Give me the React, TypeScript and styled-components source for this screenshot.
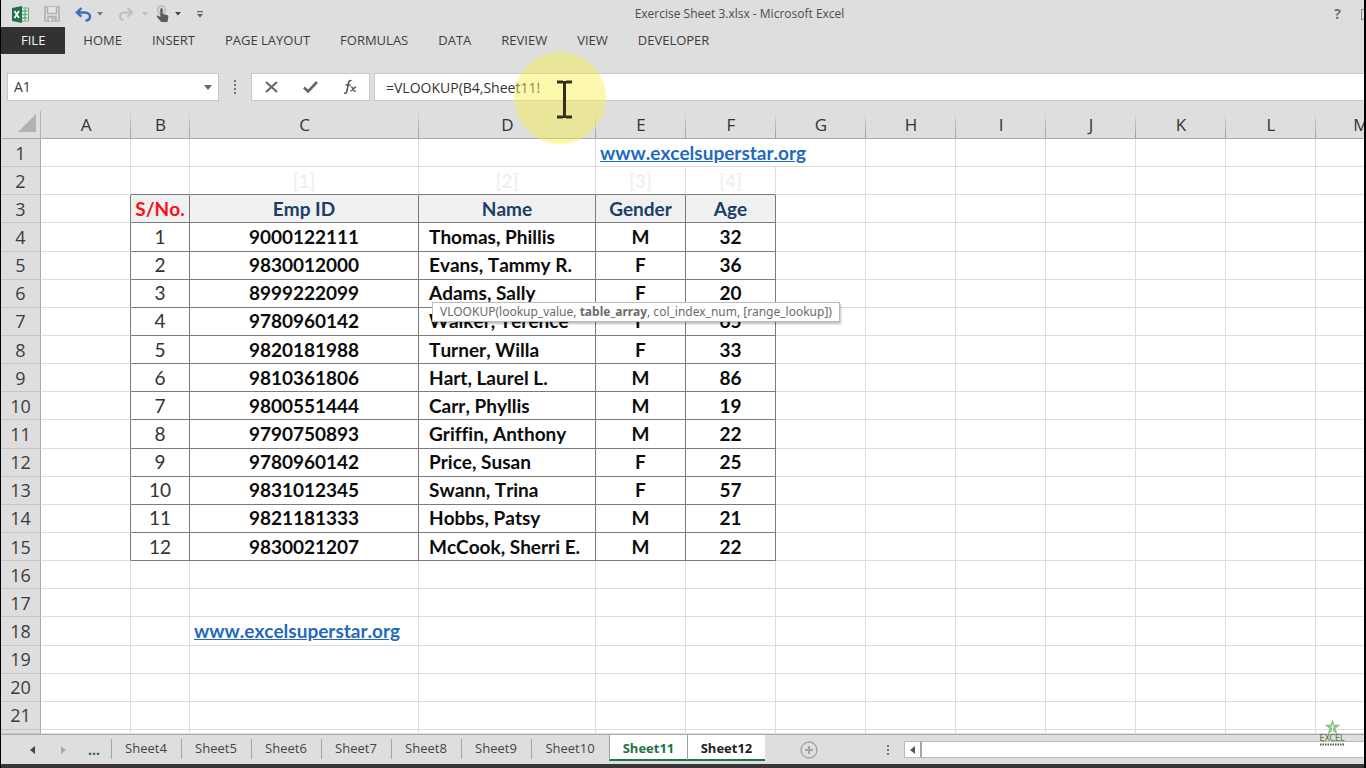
import React from "react";
import styled, { createGlobalStyle, css } from "styled-components";

const ui = `"Open Sans", "Noto Sans", sans-serif`;
const cellFont = `Lato, "Open Sans", sans-serif`;

const GlobalStyle = createGlobalStyle`
  * { box-sizing: border-box; }
  body { margin: 0; background: #000; font-family: ${ui}; }
  button, input { font-family: inherit; margin: 0; padding: 0; border: 0; background: none; color: inherit; }
  button { cursor: pointer; }
`;

const Frame = styled.div`
  position: relative;
  min-height: 100vh;
  display: flex;
  flex-direction: column;
  padding: 0 2px 0 1px;
  overflow: hidden;
`;

const Window = styled.main`
  position: relative;
  flex: 1;
  display: flex;
  flex-direction: column;
  min-width: 0;
  background: #dedede;
  border-bottom: 4px solid #3a3637;
`;

const TitleBar = styled.header`
  display: grid;
  grid-template-columns: 1fr auto 1fr;
  align-items: center;
  height: 27px;
`;

const QuickAccess = styled.div`
  display: flex;
  align-items: center;
  height: 24px;
  padding-left: 10px;
`;

const QuickButton = styled.button<{ $w: number }>`
  display: flex;
  align-items: center;
  width: ${(p) => p.$w}px;
  height: 24px;
`;

const Title = styled.h1`
  margin: 0;
  padding-left: 114px;
  font-size: 12px;
  line-height: 28px;
  font-weight: 400;
  color: #4c4c4c;
`;

const WindowControls = styled.div`
  display: flex;
  justify-content: flex-end;
  align-items: center;
  gap: 20px;
  overflow: hidden;
`;

const HelpButton = styled.button`
  font-size: 14px;
  line-height: 24px;
  font-weight: 700;
  color: #6f6f6f;
`;

const RestoreButton = styled.button`
  width: 3px;
  height: 11px;
  border: 1px solid #8b8b8b;
  border-right: 0;
`;

const Ribbon = styled.nav`
  display: flex;
  height: 28px;
`;

const RibbonTab = styled.button<{ $file?: boolean }>`
  flex: none;
  height: 27px;
  padding: ${(p) => (p.$file ? "0 20px" : "0 15px")};
  margin-right: ${(p) => (p.$file ? 3 : 0)}px;
  font-size: 13px;
  line-height: 27px;
  color: ${(p) => (p.$file ? "#f4f4f4" : "#3d3d3d")};
  background: ${(p) => (p.$file ? "#333132" : "transparent")};
`;

const FormulaRow = styled.div`
  display: flex;
  align-items: center;
  height: 28px;
  margin: 18px 0 10px;
  padding-left: 6px;
`;

const NameBox = styled.label`
  display: flex;
  align-items: center;
  width: 212px;
  height: 28px;
  padding: 0 6px;
  background: #fff;
  border: 1px solid #c8c8c8;
`;

const NameInput = styled.input`
  flex: 1;
  min-width: 0;
  font-size: 14px;
  line-height: 20px;
  color: #3a3a3a;
`;

const Dots = styled.span`
  display: flex;
  flex-direction: column;
  gap: 2px;
  width: 32px;
  align-items: center;
  i { width: 2px; height: 2px; background: #777; }
`;

const EditButtons = styled.div`
  display: flex;
  align-items: center;
  justify-content: space-around;
  width: 119px;
  height: 28px;
  background: #fff;
  border: 1px solid #c8c8c8;
`;

const EditButton = styled.button`
  display: flex;
  align-items: center;
  justify-content: center;
  width: 32px;
  height: 24px;
`;

const FormulaInput = styled.input`
  flex: 1;
  min-width: 0;
  height: 28px;
  margin-left: 4px;
  padding-left: 11px;
  background: #fff;
  border: 1px solid #c8c8c8;
  border-right: 0;
  font-size: 14px;
  color: #333;
`;

const SheetArea = styled.section`
  position: relative;
  flex: 1;
  display: grid;
  overflow: hidden;
  background: #fff;
`;

const Table = styled.table`
  table-layout: fixed;
  width: 1405px;
  height: 100%;
  border-collapse: separate;
  border-spacing: 0;
  font-family: ${cellFont};
  font-kerning: none;
  font-variant-ligatures: none;
`;

const Corner = styled.th`
  height: 28px;
  padding: 0 4px 3px 0;
  background: #dedede;
  border-right: 1px solid #b5b5b5;
  border-bottom: 1px solid #a9a9a9;
  svg { display: block; margin-left: auto; }
`;

const ColHead = styled.th`
  height: 28px;
  padding: 0;
  font: 400 17px/26px ${ui};
  color: #333;
  text-align: center;
  background: linear-gradient(#dedede, #9c9c9c) right / 1px 100% no-repeat #dedede;
  border-bottom: 1px solid #a9a9a9;
`;

const RowHead = styled.th`
  padding: 0;
  font: 400 18px/24px ${ui};
  color: #3c3c3c;
  text-align: center;
  background: #dedede;
  border-right: 1px solid #a9a9a9;
  border-bottom: 1px solid #c6c6c6;
`;

const BodyRow = styled.tr<{ $h: number }>`
  height: ${(p) => p.$h}px;
`;

type Kind = "plain" | "serial" | "value" | "name" | "head" | "headRed" | "ghost";

const kinds = {
  plain: css``,
  serial: css`color: #333; text-align: center;`,
  value: css`font-weight: 700; text-align: center;`,
  name: css`font-weight: 700; padding-left: 10px;`,
  head: css`font-weight: 700; text-align: center; color: #1b3d68; background: #f0f0f0;`,
  headRed: css`font-weight: 700; text-align: center; color: #fb0d1b; background: #f0f0f0;`,
  ghost: css`font-weight: 700; text-align: center; color: #f1f0f1;`,
};

const Cell = styled.td<{ $kind: Kind; $darkRight: boolean; $darkBottom: boolean }>`
  padding: 0 0 0 4px;
  font-size: 19px;
  line-height: 24px;
  white-space: nowrap;
  color: #0c0c0c;
  border-right: 1px solid ${(p) => (p.$darkRight ? "#7b7b7b" : "#dcdddc")};
  border-bottom: 1px solid ${(p) => (p.$darkBottom ? "#7b7b7b" : "#dcdddc")};
  ${(p) => (p.$kind === "plain" || p.$kind === "name" ? "" : "padding-left: 0;")}
  ${(p) => kinds[p.$kind]}
`;

const CellLink = styled.a`
  font-weight: 700;
  color: #1f69bf;
  text-decoration: underline;
`;

const Hint = styled.div`
  position: absolute;
  top: 191px;
  left: 431px;
  height: 20px;
  padding: 0 7px;
  font-family: "Noto Sans", "Open Sans", sans-serif;
  font-size: 12px;
  line-height: 17px;
  white-space: nowrap;
  color: #6b6b6b;
  background: #fff;
  border: 1px solid #bdbdbd;
  box-shadow: 1px 2px 2px rgba(0, 0, 0, 0.25);
`;

const TabBar = styled.footer`
  display: flex;
  align-items: center;
  height: 30px;
  border-top: 1px solid #aaa;
  color: #444;
`;

const TabScroll = styled.div`
  display: flex;
  align-items: center;
  width: 110px;
  padding-left: 21px;
`;

const ScrollButton = styled.button`
  display: flex;
  align-items: center;
  justify-content: center;
  width: 20px;
  height: 24px;
  margin-right: 11px;
`;

const MoreTabs = styled.button`
  margin-left: 4px;
  font-size: 14px;
  line-height: 24px;
  font-weight: 700;
  color: #2f6247;
`;

const TabList = styled.div`
  display: flex;
  align-self: stretch;
`;

const SheetTab = styled.button<{ $state: "idle" | "active" | "selected"; $wide?: boolean }>`
  width: ${(p) => (p.$wide ? 78 : 70)}px;
  height: 26px;
  font-size: 13px;
  line-height: 26px;
  color: #444;
  background: linear-gradient(#a5a5a5, #a5a5a5) left 4px / 1px 20px no-repeat;
  ${(p) =>
    p.$state !== "idle" &&
    css`
      font-weight: 700;
      color: ${p.$state === "active" ? "#217346" : "#222"};
      background: #fff;
      border-left: 1px solid #a0a0a0;
      border-bottom: 2px solid #217346;
    `}
`;

const AddSheet = styled.button`
  display: flex;
  margin-left: 35px;
`;

const TabSpacer = styled.div`
  flex: 0 0 54px;
`;

const ScrollTrack = styled.div`
  display: flex;
  flex: 1;
  height: 17px;
  background: #fff;
  border: 1px solid #b9b9b9;
  border-right: 0;
`;

const TrackArrow = styled.button`
  display: flex;
  align-items: center;
  justify-content: center;
  width: 17px;
  border-right: 2px solid #a5a5a5;
`;

const Pointer = styled.svg`
  position: absolute;
  left: 512px;
  top: 51px;
  pointer-events: none;
`;

const Watermark = styled.div`
  position: absolute;
  right: 17px;
  bottom: 18px;
  display: flex;
  flex-direction: column;
  align-items: center;
  width: 30px;
  font: 400 8px/8px "DejaVu Sans", sans-serif;
  color: #3f7a38;
  svg { display: block; }
`;

const Caret = ({ color = "#666" }: { color?: string }) => (
  <svg width="8" height="5" viewBox="0 0 8 5"><path d="M0 0h8L4 5z" fill={color} /></svg>
);

const SmallCaret = ({ color = "#777" }: { color?: string }) => (
  <svg width="6" height="4" viewBox="0 0 6 4"><path d="M0 0h6L3 3.6z" fill={color} /></svg>
);

const ExcelIcon = () => (
  <svg width="19" height="17" viewBox="0 0 19 17">
    <path d="M10 2h7.5v13H10z" fill="#e9f3ec" stroke="#6da884" />
    <path d="M11 5h5.500M11 8.500h5.500M11 12h5.500M14 2.500v12" stroke="#6da884" strokeWidth="1.300" />
    <path d="M1 2l10-2v17L1 15z" fill="#1f7145" />
    <path d="M3.500 5l4.500 7M8 5l-4.500 7" stroke="#fff" strokeWidth="1.700" />
  </svg>
);

const SaveIcon = () => (
  <svg width="16" height="16" viewBox="0 0 16 16" fill="none" stroke="#b3aeb5" strokeWidth="1.500">
    <path d="M1 1h14v14H1z" />
    <path d="M3.500 1v6.500h9V1" fill="#e6e4e7" />
    <path d="M4 15v-4.500h8V15" fill="#c3bfc5" />
    <path d="M6 12v3" stroke="#eee" />
  </svg>
);

const UndoIcon = () => (
  <svg width="17" height="15" viewBox="0 0 17 15" fill="none" stroke="#3d6fb4" strokeWidth="2.400">
    <path d="M6.500 1L1.800 5.500l4.700 4.200M2 5.500h7.500c4 0 5.800 2 5.500 4.500-.3 2.300-2 3.500-4.500 3.500" />
  </svg>
);

const RedoIcon = () => (
  <svg width="16" height="15" viewBox="0 0 16 15" fill="none" stroke="#bdbdbd" strokeWidth="2">
    <path d="M9.500 1l4.700 4.500-4.700 4.200M14 5.500H7c-3.500 0-5.200 2-5 4.500.2 2 1.500 3 3.500 3" />
  </svg>
);

const TouchIcon = () => (
  <svg width="14" height="18" viewBox="0 0 14 18">
    <circle cx="5.500" cy="5" r="4" fill="#d5d8e2" stroke="#b4b9ca" strokeWidth="1.300" />
    <path d="M4.300 4.500c0-1.600 2.400-1.600 2.400 0V9l4.300 1c1 .3 1.500 1 1.300 2L11.500 17H5.200L1 12c-.6-.9.500-1.900 1.400-1.200l1.900 1.300z" fill="#5c5c5e" />
  </svg>
);

const Arrow = ({ dir, color }: { dir: "left" | "right"; color: string }) => (
  <svg width="5" height="8" viewBox="0 0 5 8">
    <path d={dir === "left" ? "M5 0v8L0 4z" : "M0 0v8l5-4z"} fill={color} />
  </svg>
);

const columns: [string, number][] = [
  ["A", 90], ["B", 59], ["C", 229], ["D", 177], ["E", 90], ["F", 90], ["G", 90],
  ["H", 90], ["I", 90], ["J", 90], ["K", 90], ["L", 90], ["M", 90],
];

const people = [
  ["9000122111", "Thomas, Phillis", "M", "32"],
  ["9830012000", "Evans, Tammy R.", "F", "36"],
  ["8999222099", "Adams, Sally", "F", "20"],
  ["9780960142", "Walker, Terence", "F", "65"],
  ["9820181988", "Turner, Willa", "F", "33"],
  ["9810361806", "Hart, Laurel L.", "M", "86"],
  ["9800551444", "Carr, Phyllis", "M", "19"],
  ["9790750893", "Griffin, Anthony", "M", "22"],
  ["9780960142", "Price, Susan", "F", "25"],
  ["9831012345", "Swann, Trina", "F", "57"],
  ["9821181333", "Hobbs, Patsy", "M", "21"],
  ["9830021207", "McCook, Sherri E.", "M", "22"],
];

const siteLink = <CellLink href="#site">www.excelsuperstar.org</CellLink>;

function cellContent(row: number, col: number): { kind: Kind; content?: React.ReactNode; span?: number } {
  if (row === 1 && col === 4) return { kind: "plain", content: siteLink, span: 3 };
  if (row === 18 && col === 2) return { kind: "plain", content: siteLink };
  if (col < 1 || col > 5) return { kind: "plain" };
  if (row === 2 && col > 1) return { kind: "ghost", content: `[${col - 1}]` };
  if (row === 3)
    return { kind: col === 1 ? "headRed" : "head", content: ["S/No.", "Emp ID", "Name", "Gender", "Age"][col - 1] };
  if (row > 3 && row < 16) {
    if (col === 1) return { kind: "serial", content: row - 3 };
    return { kind: col === 3 ? "name" : "value", content: people[row - 4][col - 2] };
  }
  return { kind: "plain" };
}

function GridRow({ row }: { row: number }) {
  const cells: React.ReactNode[] = [];
  for (let col = 0; col < columns.length; col++) {
    const { kind, content, span = 1 } = cellContent(row, col);
    cells.push(
      <Cell
        key={col}
        colSpan={span}
        $kind={kind}
        $darkRight={row > 2 && row < 16 && col < 6}
        $darkBottom={row > 1 && row < 16 && col > 0 && col < 6}
      >
        {content}
      </Cell>
    );
    col += span - 1;
  }
  return (
    <BodyRow $h={28}>
      <RowHead scope="row">{row}</RowHead>
      {cells}
    </BodyRow>
  );
}

const ribbonTabs = ["HOME", "INSERT", "PAGE LAYOUT", "FORMULAS", "DATA", "REVIEW", "VIEW", "DEVELOPER"];

export default function App() {
  return (
    <Frame>
      <GlobalStyle />
      <Window>
        <TitleBar>
          <QuickAccess>
            <QuickButton $w={33} aria-label="Excel"><ExcelIcon /></QuickButton>
            <QuickButton $w={31} aria-label="Save"><SaveIcon /></QuickButton>
            <QuickButton $w={22} aria-label="Undo"><UndoIcon /></QuickButton>
            <QuickButton $w={21} aria-label="Undo history"><SmallCaret /></QuickButton>
            <QuickButton $w={24} aria-label="Redo"><RedoIcon /></QuickButton>
            <QuickButton $w={14} aria-label="Redo history"><SmallCaret color="#bbb" /></QuickButton>
            <QuickButton $w={19} aria-label="Touch mode"><TouchIcon /></QuickButton>
            <QuickButton $w={22} aria-label="Touch mode options"><SmallCaret color="#444" /></QuickButton>
            <QuickButton $w={12} aria-label="Customize toolbar">
              <svg width="6" height="7" viewBox="0 0 6 7"><path d="M0 0h6v1.300H0zM0 3h6L3 6.500z" fill="#666" /></svg>
            </QuickButton>
          </QuickAccess>
          <Title>Exercise Sheet 3.xlsx - Microsoft Excel</Title>
          <WindowControls>
            <HelpButton aria-label="Help">?</HelpButton>
            <RestoreButton aria-label="Ribbon display options" />
          </WindowControls>
        </TitleBar>
        <Ribbon>
          <RibbonTab $file>FILE</RibbonTab>
          {ribbonTabs.map((t) => <RibbonTab key={t}>{t}</RibbonTab>)}
        </Ribbon>
        <FormulaRow>
          <NameBox>
            <NameInput aria-label="Name box" defaultValue="A1" />
            <Caret />
          </NameBox>
          <Dots><i /><i /><i /><i /></Dots>
          <EditButtons>
            <EditButton aria-label="Cancel">
              <svg width="13" height="12" viewBox="0 0 13 12"><path d="M1 1l11 10M12 1L1 11" stroke="#666" strokeWidth="2" /></svg>
            </EditButton>
            <EditButton aria-label="Enter">
              <svg width="15" height="12" viewBox="0 0 15 12"><path d="M1 6.500l4 4L14 1" fill="none" stroke="#666" strokeWidth="2.600" /></svg>
            </EditButton>
            <EditButton aria-label="Insert function">
              <svg width="14" height="16" viewBox="0 0 14 16" fill="none" stroke="#555" strokeWidth="1.500">
                <path d="M8.500 2C7 .8 6 1.500 5.500 4l-1.600 8c-.4 2-1.400 2.800-2.900 2M2.500 6h5" />
                <path d="M7.500 8c1.500-.6 2 .3 2.500 2s1 2.600 2.800 1.800M13 8c-2 0-3.300 4.200-5.700 4.200" strokeWidth="1.300" />
              </svg>
            </EditButton>
          </EditButtons>
          <FormulaInput aria-label="Formula bar" defaultValue="=VLOOKUP(B4,Sheet11!" />
        </FormulaRow>
        <SheetArea>
          <Table>
            <colgroup>
              <col style={{ width: 40 }} />
              {columns.map(([name, width]) => <col key={name} style={{ width }} />)}
            </colgroup>
            <thead>
              <tr>
                <Corner aria-label="Select all">
                  <svg width="18" height="18" viewBox="0 0 18 18"><path d="M18 0v18H0z" fill="#b2b2b2" /></svg>
                </Corner>
                {columns.map(([name]) => <ColHead key={name} scope="col">{name}</ColHead>)}
              </tr>
            </thead>
            <tbody>
              {Array.from({ length: 21 }, (_, i) => <GridRow key={i} row={i + 1} />)}
              <BodyRow $h={4}>
                <RowHead />
                {columns.map(([name]) => (
                  <Cell key={name} $kind="plain" $darkRight={false} $darkBottom={false} />
                ))}
              </BodyRow>
            </tbody>
          </Table>
          <Hint role="tooltip">
            VLOOKUP(lookup_value, <b>table_array</b>, col_index_num, [range_lookup])
          </Hint>
        </SheetArea>
        <TabBar>
          <TabScroll>
            <ScrollButton aria-label="Previous sheets"><Arrow dir="left" color="#444" /></ScrollButton>
            <ScrollButton aria-label="Next sheets"><Arrow dir="right" color="#aaa" /></ScrollButton>
            <MoreTabs>...</MoreTabs>
          </TabScroll>
          <TabList>
            {[4, 5, 6, 7, 8, 9].map((n) => <SheetTab key={n} $state="idle">Sheet{n}</SheetTab>)}
            <SheetTab $state="idle" $wide>Sheet10</SheetTab>
            <SheetTab $state="active" $wide>Sheet11</SheetTab>
            <SheetTab $state="selected" $wide>Sheet12</SheetTab>
          </TabList>
          <AddSheet aria-label="New sheet">
            <svg width="18" height="18" viewBox="0 0 18 18" fill="none" stroke="#a3a3a3" strokeWidth="1.300">
              <circle cx="9" cy="9" r="8" /><path d="M9 5v8M5 9h8" strokeWidth="2" />
            </svg>
          </AddSheet>
          <TabSpacer />
          <Dots><i /><i /><i /></Dots>
          <ScrollTrack>
            <TrackArrow aria-label="Scroll left"><Arrow dir="left" color="#555" /></TrackArrow>
          </ScrollTrack>
        </TabBar>
        <Watermark>
          <svg width="17" height="16" viewBox="0 0 17 16">
            <path d="M8.500 0l1.900 5.800h6.200l-5 3.600 1.900 6-5-3.700-5 3.700 1.900-6-5-3.600h6.200z" fill="#8fc08c" />
            <path d="M8.500 5.500v7M6.500 8h4" stroke="#e8f4e6" strokeWidth="1.200" />
          </svg>
          EXCEL
          <svg width="24" height="3" viewBox="0 0 24 3"><path d="M0 1.500h24" stroke="#555" strokeWidth="2" strokeDasharray="1.500 1" /></svg>
        </Watermark>
        <Pointer width="94" height="94" viewBox="0 0 94 94">
          <circle cx="47" cy="47" r="46" fill="#f6f04a" fillOpacity="0.45" />
          <path d="M44 31h6M53 31h6M44 66h6M53 66h6M50 31.500h3M50 65.500h3M51.500 31v35" stroke="#33301a" strokeWidth="3" fill="none" />
        </Pointer>
      </Window>
    </Frame>
  );
}
